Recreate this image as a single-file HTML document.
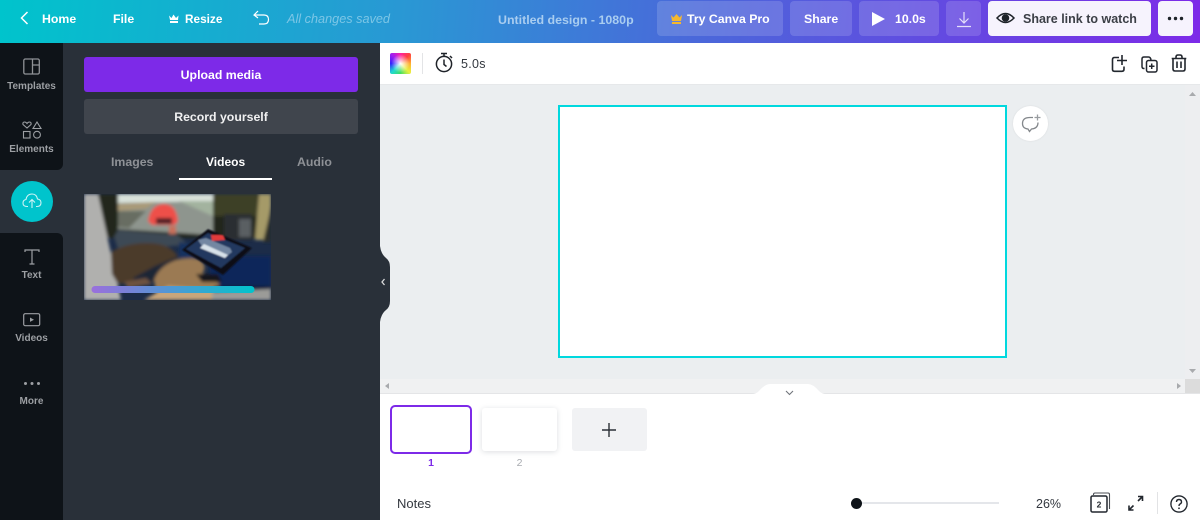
<!DOCTYPE html>
<html><head><meta charset="utf-8"><style>
*{box-sizing:border-box}
html,body{margin:0;padding:0}
body{width:1200px;height:520px;overflow:hidden;position:relative;background:#fff;font-family:"Liberation Sans",sans-serif}
.a{position:absolute}
.t{position:absolute;white-space:nowrap;line-height:16px}
.tb{font-size:12.3px;font-weight:700;color:#fff}
.btn{position:absolute;top:1px;height:35px;border-radius:4px;background:rgba(255,255,255,.15)}
.nav{position:absolute;left:0;width:63px;text-align:center;font-size:10px;font-weight:700;color:#9c9fa3;line-height:12px}
svg{position:absolute;overflow:visible}
</style></head><body>
<div class="a" style="left:0;top:0;width:1200px;height:43px;background:linear-gradient(95deg,#00c4cc 0%,#2a97d4 34%,#4a68da 58%,#7d2ae8 100%)"></div>
<svg style="left:0;top:0" width="30" height="43"><path d="M27.500 12l-6 6 6 6" fill="none" stroke="#fff" stroke-width="1.500"/></svg>
<div class="t tb" style="left:42px;top:11px">Home</div>
<div class="t tb" style="left:113px;top:11px">File</div>
<svg style="left:168px;top:14px" width="12" height="10"><path d="M1 1.500l2.500 2.500L5.500 .5 8 4l2.500-2.500L10 6H2zM2 7h8v2H2z" fill="#fff"/></svg>
<div class="t tb" style="left:185px;top:11px;font-size:11.800px">Resize</div>
<svg style="left:252px;top:10px" width="18" height="16"><path d="M6 1L2 5l4 3M2 5h10q4.500 0 4.500 4.500T12 14H7" fill="none" stroke="#fff" stroke-width="1.200"/></svg>
<div class="t" style="left:287px;top:11px;font-size:12.700px;font-style:italic;color:#7cc6e6">All changes saved</div>
<div class="t" style="left:498px;top:12px;font-size:12.400px;font-weight:700;color:#a9cdf0">Untitled design - 1080p</div>
<div class="btn" style="left:657px;width:126px"></div>
<svg style="left:671px;top:14px" width="11" height="10"><path d="M0 1l2.500 2.500L5.500 0l3 3.500L11 1l-1 6H1zM1 8h9v2H1z" fill="#f5b82e"/></svg>
<div class="t tb" style="left:687px;top:11px">Try Canva Pro</div>
<div class="btn" style="left:790px;width:62px"></div>
<div class="t tb" style="left:804px;top:11px">Share</div>
<div class="btn" style="left:859px;width:80px"></div>
<svg style="left:871px;top:11px" width="14" height="16"><path d="M1 1l13 7-13 7z" fill="#fff"/></svg>
<div class="t tb" style="left:895px;top:11px">10.0s</div>
<div class="btn" style="left:946px;width:35px"></div>
<svg style="left:955px;top:10px" width="18" height="18"><path d="M9 2v11M4.500 8.500l4.500 4.500 4.500-4.500M2 16.500h14" fill="none" stroke="#fff" stroke-opacity=".8" stroke-width="1.200"/></svg>
<div class="a" style="left:988px;top:1px;width:163px;height:35px;border-radius:4px;background:#f6f3fd"></div>
<svg style="left:996px;top:10px" width="20" height="16"><path d="M1 8q8.500-9 17 0q-8.500 9-17 0z" fill="none" stroke="#1e2329" stroke-width="1.500"/><circle cx="9.500" cy="8" r="3.800" fill="#1e2329"/></svg>
<div class="t" style="left:1023px;top:11px;font-size:12.500px;font-weight:700;color:#3b3f46">Share link to watch</div>
<div class="a" style="left:1158px;top:1px;width:35px;height:35px;border-radius:4px;background:#f6f3fd"></div>
<svg style="left:1167px;top:16px" width="18" height="5"><circle cx="2.500" cy="2.500" r="1.700" fill="#1e2329"/><circle cx="8.500" cy="2.500" r="1.700" fill="#1e2329"/><circle cx="14.500" cy="2.500" r="1.700" fill="#1e2329"/></svg>

<div class="a" style="left:0;top:43px;width:380px;height:477px;background:#293039"></div>
<div class="a" style="left:0;top:43px;width:63px;height:127px;background:#0e1318;border-radius:0 0 6px 0"></div>
<div class="a" style="left:0;top:233px;width:63px;height:287px;background:#0e1318;border-radius:0 6px 0 0"></div>
<svg style="left:23px;top:58px" width="18" height="18"><rect x=".8" y="1" width="15.500" height="15" rx="1.500" fill="none" stroke="#8f9296" stroke-width="1.300"/><path d="M9.500 1v15M9.500 7h7" stroke="#8f9296" stroke-width="1.300"/></svg>
<div class="nav" style="top:81px">Templates</div>
<svg style="left:22px;top:121px" width="20" height="18"><path d="M5 7L1 3.500Q.5 1 2.500 1 4 1 5 2.500 6 1 7.500 1 9.500 1 9 3.500z" fill="none" stroke="#9c9fa3" stroke-width="1.100"/><path d="M15 1l4 6.500h-8z" fill="none" stroke="#9c9fa3" stroke-width="1.100"/><rect x="1.500" y="10.500" width="6.500" height="6.500" fill="none" stroke="#9c9fa3" stroke-width="1.100"/><circle cx="15" cy="13.700" r="3.400" fill="none" stroke="#9c9fa3" stroke-width="1.100"/></svg>
<div class="nav" style="top:144px">Elements</div>
<div class="a" style="left:11px;top:181px;width:42px;height:41px;border-radius:50%;background:#00c4cc"></div>
<svg style="left:22px;top:192px" width="20" height="18"><path d="M6 14.500H5q-4 0-4-3.500 0-3 3-3.500Q5 2 10 2q4.500 0 5.500 5 3.500.5 3.500 3.800 0 3.700-4 3.700h-1M10 16V8M7 10.500l3-3 3 3" fill="none" stroke="#fff" stroke-opacity=".8" stroke-width="1.100"/></svg>
<svg style="left:24px;top:249px" width="16" height="16"><path d="M1 3V1h14v2M8 1v14M5.500 15h5" fill="none" stroke="#9c9fa3" stroke-width="1.200"/></svg>
<div class="nav" style="top:270px">Text</div>
<svg style="left:23px;top:313px" width="18" height="14"><rect x=".7" y=".7" width="16" height="12" rx="1.500" fill="none" stroke="#9c9fa3" stroke-width="1.200"/><path d="M7 4.500l4 2.200-4 2.200z" fill="#9c9fa3"/></svg>
<div class="nav" style="top:333px">Videos</div>
<svg style="left:23px;top:381px" width="18" height="5"><circle cx="2.500" cy="2.500" r="1.500" fill="#9c9fa3"/><circle cx="9" cy="2.500" r="1.500" fill="#9c9fa3"/><circle cx="15.500" cy="2.500" r="1.500" fill="#9c9fa3"/></svg>
<div class="nav" style="top:396px">More</div>

<div class="a" style="left:84px;top:57px;width:274px;height:35px;border-radius:3px;background:#7d2ae8"></div>
<div class="t tb" style="left:84px;width:274px;text-align:center;top:67px">Upload media</div>
<div class="a" style="left:84px;top:99px;width:274px;height:35px;border-radius:3px;background:#40454d"></div>
<div class="t tb" style="left:84px;width:274px;text-align:center;top:109px;color:#f0f0f1">Record yourself</div>
<div class="t" style="left:111px;top:154px;font-size:12.300px;font-weight:700;color:#8e9196">Images</div>
<div class="t tb" style="left:206px;top:154px;font-size:12px">Videos</div>
<div class="t" style="left:297px;top:154px;font-size:12.300px;font-weight:700;color:#8e9196">Audio</div>
<div class="a" style="left:179px;top:178px;width:93px;height:2px;background:#fff"></div>

<svg style="left:84px;top:194px;overflow:hidden" width="187" height="106" viewBox="0 0 187 106">
<defs><filter id="b" x="-10%" y="-10%" width="120%" height="120%"><feGaussianBlur stdDeviation="1.600"/></filter><filter id="c" x="-10%" y="-10%" width="120%" height="120%"><feGaussianBlur stdDeviation=".7"/></filter><linearGradient id="g"><stop offset="0" stop-color="#9a6fdc"/><stop offset="1" stop-color="#00c4cc"/></linearGradient></defs>
<rect width="187" height="106" fill="#1c2c48"/>
<g filter="url(#b)">
<rect x="0" y="0" width="187" height="44" fill="#23261f"/>
<rect x="129" y="0" width="45" height="22" fill="#3c3f28"/>
<rect x="140" y="20" width="28" height="26" fill="#2a2d31"/>
<rect x="155" y="25" width="12" height="18" fill="#5a5e62"/>
<path d="M175 0h12v12l-6 34h-10z" fill="#a59a68"/>
<path d="M187 14v34h-8z" fill="#2a2e2c"/>
<path d="M34 0H129V41L34 35z" fill="#8e958e"/>
<path d="M34 0H129V7L34 9z" fill="#d9e2da"/>
<path d="M95 7H129V22z" fill="#a3b39f"/>
<path d="M34 10L72 8 62 15 34 17z" fill="#a99a78"/>
<path d="M34 17H62L45 34 34 33z" fill="#686d62"/>
<path d="M64 27q3-17 16-17 12 0 14 17l-3 4H68z" fill="#ee4f4a"/>
<rect x="72" y="24" width="16" height="6" fill="#4f2028"/>
<rect x="85" y="32" width="7" height="8" fill="#c8705a"/>
<path d="M34 36l60 5 10 10-62 4-8 0-4-12z" fill="#3c4a54"/>
<path d="M95 48l35 6-1 10H95z" fill="#12315e"/>
<path d="M125 62h62v32l-60 0z" fill="#10285a"/>
<path d="M0 0H14L37 106H0z" fill="#b0b0ae"/>
<path d="M27 58q15-9 36-9 24 0 31 14L74 76 52 88 34 90l-6-10z" fill="#4c3a2c"/>
<path d="M49 84l22-12 22-9 4 8-26 16-18 3z" fill="#1e2536"/>
<path d="M40 88l22-4 6 6-24 4z" fill="#6e5240"/>
<path d="M70 86q6-16 26-21 14-2 20 1 8 6 2 14l18 10-10 8H72z" fill="#9b7a52"/>
<path d="M60 106l24-14 52 4-4 10z" fill="#c8a67c"/>
<path d="M130 92l57-0v8l-57 0z" fill="#0f1c38"/>
<path d="M128 98l59-3v11h-59z" fill="#9b9b98"/>
<path d="M112 80l22 0 4 8-20 0z" fill="#14161c"/>
</g>
<g filter="url(#c)">
<path d="M98 56L124 35 168 54 139 81z" fill="#0c1016"/>
<path d="M102 55L124 39 161 54 137 74z" fill="#24385f"/>
<path d="M118 52l-4-6 8-2 24 10 2 4-8 6z" fill="#8ea2b8" opacity=".75"/>
<path d="M120 50l24 11-3 3-25-10z" fill="#d8e2ea"/>
<path d="M127 41l12 0 2 5-13 1z" fill="#e23b3a"/>
</g>
<rect x="7.500" y="92" width="163" height="7" rx="3.500" fill="url(#g)"/>
</svg>

<div class="a" style="left:380px;top:43px;width:820px;height:42px;background:#fff"></div>
<div class="a" style="left:380px;top:85px;width:820px;height:294px;background:#ebeef0"></div>
<div class="a" style="left:380px;top:84px;width:820px;height:1px;background:#e6e8ea"></div>
<div class="a" style="left:1185px;top:85px;width:15px;height:294px;background:#edeef0"></div>
<div class="a" style="left:380px;top:379px;width:820px;height:15px;background:#f0f1f2"></div>
<div class="a" style="left:380px;top:393px;width:820px;height:1px;background:#e4e5e7"></div>
<div class="a" style="left:1185px;top:379px;width:15px;height:14px;background:#dcdcdc"></div>
<svg style="left:385px;top:383px" width="4" height="6"><path d="M4 0v6L0 3z" fill="#a8aaad"/></svg>
<svg style="left:1177px;top:383px" width="4" height="6"><path d="M0 0v6l4-3z" fill="#a8aaad"/></svg>
<svg style="left:1189px;top:92px" width="7" height="4"><path d="M0 4h7L3.500 0z" fill="#a8aaad"/></svg>
<svg style="left:1189px;top:369px" width="7" height="4"><path d="M0 0h7L3.500 4z" fill="#a8aaad"/></svg>

<div class="a" style="left:390px;top:53px;width:21px;height:21px;border-radius:2px;background:radial-gradient(circle,#fff 0,rgba(255,255,255,0) 62%),conic-gradient(from 0deg,#ff20a0,#ff4040,#ffb030,#e8f040,#40e060,#20d8d0,#3020ff,#a020f0,#ff20a0)"></div>
<div class="a" style="left:422px;top:53px;width:1px;height:21px;background:#e3e4e6"></div>
<svg style="left:434px;top:52px" width="20" height="21"><circle cx="10" cy="12" r="7.600" fill="none" stroke="#1f2329" stroke-width="1.500"/><path d="M7 1.500h6M10 1.500v3M10 7.500v5l2.500 2M16 4l2 2" fill="none" stroke="#1f2329" stroke-width="1.500"/></svg>
<div class="t" style="left:461px;top:56px;font-size:12.500px;color:#33383f;letter-spacing:.3px">5.0s</div>
<svg style="left:1111px;top:54px" width="18" height="18"><path d="M8 3.500H3.500Q1.500 3.500 1.500 5.500v10q0 1.800 2 1.800h7.500q2 0 2-2V12.500M11 1v10M6 6.500h10" fill="none" stroke="#22272e" stroke-width="1.600"/></svg>
<svg style="left:1141px;top:56px" width="17" height="17"><path d="M3.500 12.500H3q-2 0-2-2V3q0-2 2-2h4.500q2 0 2.500 3" fill="none" stroke="#22272e" stroke-width="1.500"/><rect x="5.500" y="4.500" width="10.500" height="11.500" rx="2" fill="none" stroke="#22272e" stroke-width="1.500"/><path d="M10.700 7.500v5.500M8 10.300h5.500" stroke="#22272e" stroke-width="1.500"/></svg>
<svg style="left:1171px;top:54px" width="16" height="18"><path d="M.7 4.500h14.600M5 4.500V3q0-2 2-2h2q2 0 2 2v1.500M2 4.500v10.500q0 2 2 2h8q2 0 2-2V4.500M6 7.500v6.500M10 7.500v6.500" fill="none" stroke="#22272e" stroke-width="1.600"/></svg>

<div class="a" style="left:558px;top:105px;width:449px;height:253px;background:#fff;border:2px solid #00d8de"></div>
<div class="a" style="left:1013px;top:106px;width:35px;height:35px;border-radius:50%;background:#fff;box-shadow:0 0 2px rgba(0,0,0,.08)"></div>
<svg style="left:1021px;top:114px" width="21" height="20"><path d="M12 3.500H9Q1.500 3.500 1.500 9.500q0 5 5.500 5.500l1.500 2.500 2-2.500q6.500-.5 6.500-6.500" fill="none" stroke="#84888c" stroke-width="1.300"/><path d="M16.500 .5v6M13.500 3.500h6" stroke="#9a9da1" stroke-width="1.300"/></svg>

<svg style="left:379px;top:246px" width="11" height="76"><path d="M0 0H1q1 8 6 12 4 3 4 9v34q0 6-4 9-5 4-6 12H0z" fill="#293039"/><path d="M5.500 33l-2.500 3 2.500 3" fill="none" stroke="#d8d9da" stroke-width="1.300"/></svg>

<div class="a" style="left:380px;top:394px;width:820px;height:126px;background:#fff"></div>
<svg style="left:752px;top:383px" width="74" height="12"><path d="M0 11q4 0 7-3 6-7 11-7h38q5 0 11 7 3 3 7 3z" fill="#fff"/></svg>
<svg style="left:785px;top:390px" width="9" height="6"><path d="M1 1l3.500 3.500L8 1" fill="none" stroke="#70747a" stroke-width="1.100"/></svg>
<div class="a" style="left:390px;top:405px;width:82px;height:49px;border:2px solid #7d2ae8;border-radius:5px;background:#fff"></div>
<div class="t" style="left:390px;width:82px;text-align:center;top:455px;font-size:10.500px;font-weight:700;color:#7d2ae8">1</div>
<div class="a" style="left:482px;top:408px;width:75px;height:43px;border-radius:3px;background:#fff;box-shadow:0 1px 6px rgba(40,50,70,.16)"></div>
<div class="t" style="left:482px;width:75px;text-align:center;top:455px;font-size:10.500px;color:#a8abb0">2</div>
<div class="a" style="left:572px;top:408px;width:75px;height:43px;border-radius:3px;background:#f1f2f4"></div>
<svg style="left:601px;top:422px" width="16" height="16"><path d="M8 1v14M1 8h14" stroke="#2b3036" stroke-width="1.400"/></svg>
<div class="t" style="left:397px;top:496px;font-size:13px;color:#33383f">Notes</div>
<div class="a" style="left:858px;top:502px;width:141px;height:2px;background:#e4e6ea"></div>
<div class="a" style="left:851px;top:498px;width:11px;height:11px;border-radius:50%;background:#0e1318"></div>
<div class="t" style="left:1036px;top:496px;font-size:12.500px;color:#33383f">26%</div>
<svg style="left:1090px;top:492px" width="22" height="22"><path d="M3.500 3V2.500q0-1.500 1.500-1.500h13q1.500 0 1.500 1.500v14.500" fill="none" stroke="#4b4f55" stroke-width="1.100"/><rect x="1" y="4" width="16" height="16" rx="1.500" fill="#fff" stroke="#22272e" stroke-width="1.500"/><text x="9" y="15.500" font-size="8.500" font-weight="700" text-anchor="middle" fill="#22272e" font-family="Liberation Sans, sans-serif">2</text></svg>
<svg style="left:1128px;top:495px" width="16" height="16"><path d="M10 1.500h4.500V6M14.500 1.500l-4.500 4.500M1 10.500V15h4.500M1 15l4.500-4.500" fill="none" stroke="#22272e" stroke-width="1.600"/></svg>
<div class="a" style="left:1157px;top:492px;width:1px;height:22px;background:#e2e3e5"></div>
<svg style="left:1170px;top:495px" width="18" height="18"><circle cx="9" cy="9" r="8.100" fill="none" stroke="#22272e" stroke-width="1.400"/><path d="M6.500 7q0-2.500 2.500-2.500T11.500 7q0 1.200-1.500 2-1 .6-1 2" fill="none" stroke="#22272e" stroke-width="1.400"/><circle cx="9" cy="13.300" r=".9" fill="#22272e"/></svg>
</body></html>
